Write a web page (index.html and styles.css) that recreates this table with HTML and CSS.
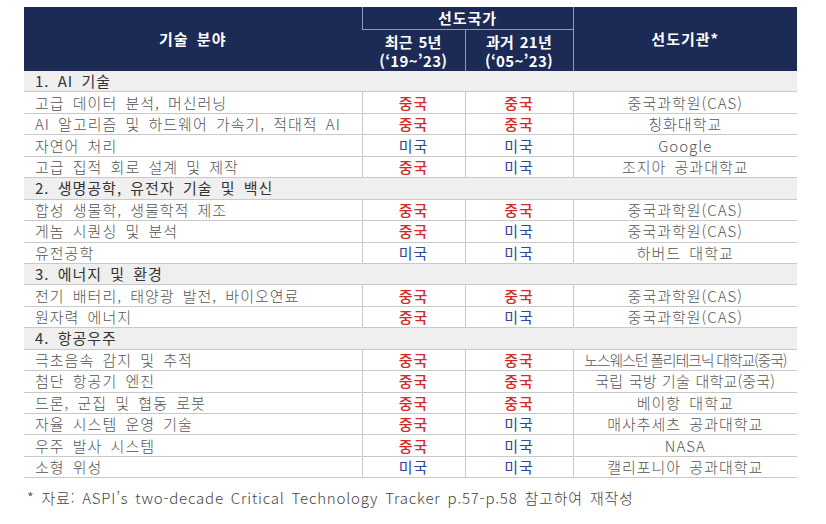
FILE: index.html
```html
<!DOCTYPE html>
<html lang="ko">
<head>
<meta charset="utf-8">
<link rel="stylesheet" href="styles.css">
</head>
<body>
<div class="page">
<table class="tbl">
  <colgroup>
    <col class="c1"><col class="c2"><col class="c3"><col class="c4">
  </colgroup>
  <thead>
    <tr class="h1">
      <th rowspan="2">기술 분야</th>
      <th colspan="2">선도국가</th>
      <th rowspan="2">선도기관*</th>
    </tr>
    <tr class="h2">
      <th>최근 5년<br>(‘19~’23)</th>
      <th>과거 21년<br>(‘05~’23)</th>
    </tr>
  </thead>
  <tbody>
    <tr class="sec"><td colspan="4">1. AI 기술</td></tr>
    <tr><td>고급 데이터 분석, 머신러닝</td><td class="cn">중국</td><td class="cn">중국</td><td class="org">중국과학원(CAS)</td></tr>
    <tr><td>AI 알고리즘 및 하드웨어 가속기, 적대적 AI</td><td class="cn">중국</td><td class="cn">중국</td><td class="org">칭화대학교</td></tr>
    <tr><td>자연어 처리</td><td class="us">미국</td><td class="us">미국</td><td class="org">Google</td></tr>
    <tr><td>고급 집적 회로 설계 및 제작</td><td class="cn">중국</td><td class="us">미국</td><td class="org">조지아 공과대학교</td></tr>
    <tr class="sec"><td colspan="4">2. 생명공학, 유전자 기술 및 백신</td></tr>
    <tr><td>합성 생물학, 생물학적 제조</td><td class="cn">중국</td><td class="cn">중국</td><td class="org">중국과학원(CAS)</td></tr>
    <tr><td>게놈 시퀀싱 및 분석</td><td class="cn">중국</td><td class="us">미국</td><td class="org">중국과학원(CAS)</td></tr>
    <tr><td>유전공학</td><td class="us">미국</td><td class="us">미국</td><td class="org">하버드 대학교</td></tr>
    <tr class="sec"><td colspan="4">3. 에너지 및 환경</td></tr>
    <tr><td>전기 배터리, 태양광 발전, 바이오연료</td><td class="cn">중국</td><td class="cn">중국</td><td class="org">중국과학원(CAS)</td></tr>
    <tr><td>원자력 에너지</td><td class="cn">중국</td><td class="us">미국</td><td class="org">중국과학원(CAS)</td></tr>
    <tr class="sec"><td colspan="4">4. 항공우주</td></tr>
    <tr><td>극초음속 감지 및 추적</td><td class="cn">중국</td><td class="cn">중국</td><td class="org narrow">노스웨스턴 폴리테크닉 대학교(중국)</td></tr>
    <tr><td>첨단 항공기 엔진</td><td class="cn">중국</td><td class="cn">중국</td><td class="org mid">국립 국방 기술 대학교(중국)</td></tr>
    <tr><td>드론, 군집 및 협동 로봇</td><td class="cn">중국</td><td class="cn">중국</td><td class="org">베이항 대학교</td></tr>
    <tr><td>자율 시스템 운영 기술</td><td class="cn">중국</td><td class="us">미국</td><td class="org">매사추세츠 공과대학교</td></tr>
    <tr><td>우주 발사 시스템</td><td class="cn">중국</td><td class="us">미국</td><td class="org">NASA</td></tr>
    <tr><td>소형 위성</td><td class="us">미국</td><td class="us">미국</td><td class="org">캘리포니아 공과대학교</td></tr>
  </tbody>
</table>
<p class="note">* 자료: ASPI’s two-decade Critical Technology Tracker p.57-p.58 참고하여 재작성</p>
</div>
</body>
</html>
```

FILE: styles.css
```css
html, body {
  margin: 0;
  padding: 0;
  background: #ffffff;
}

body {
  font-family: "Noto Sans CJK KR", "Noto Sans", "Liberation Sans", sans-serif;
  color: #555555;
}

.page {
  padding: 7px 0 0 24px;
}

.tbl {
  border-collapse: collapse;
  table-layout: fixed;
  width: 773px;
  font-size: 15px;
  letter-spacing: 1px;
  word-spacing: 3px;
}

.c1 { width: 338px; }
.c2 { width: 103px; }
.c3 { width: 108px; }
.c4 { width: 224px; }

.tbl th {
  background: #1c2a56;
  color: #ffffff;
  font-weight: 700;
  padding: 0;
  line-height: 20px;
  border-left: 1px solid #8f98b5;
  text-align: center;
}

.tbl th:first-child {
  border-left: none;
}

.h1 th {
  height: 22px;
}

.h1 th[colspan] {
  border-bottom: 1px solid #8f98b5;
}

.h1 th:last-child {
  border-left: 1px solid #8f98b5;
}

.h2 th {
  height: 41px;
  line-height: 19px;
  letter-spacing: 0.3px;
  word-spacing: 1px;
}

.tbl td {
  height: 20.45px;
  padding: 0;
  line-height: 18px;
  border-bottom: 1px solid #c9c9c9;
  border-left: 1px solid #c9c9c9;
  white-space: nowrap;
  font-weight: 300;
}

.tbl td:first-child {
  border-left: none;
  padding-left: 11px;
}

.sec td {
  background: #efefef;
  color: #333333;
  font-weight: 400;
}

.cn, .us, .org {
  text-align: center;
}

.tbl td.cn {
  color: #d42a2a;
  font-weight: 500;
}

.tbl td.us {
  color: #2c4a98;
  font-weight: 400;
}

.narrow {
  letter-spacing: -1.2px;
  word-spacing: 0;
}

.mid {
  letter-spacing: 0.2px;
  word-spacing: 1px;
}

.note {
  margin: 10px 0 0 3px;
  font-size: 15px;
  line-height: 20px;
  letter-spacing: 0.8px;
  word-spacing: 2px;
  color: #444444;
  font-weight: 300;
}
```
